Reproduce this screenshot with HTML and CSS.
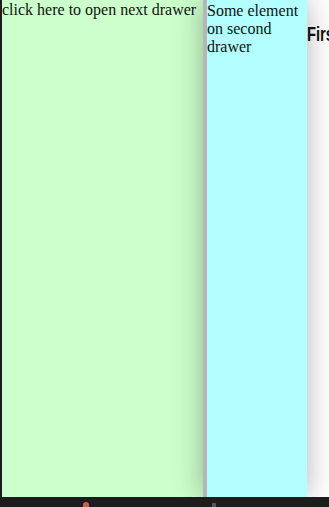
FILE: index.html
```html
<!DOCTYPE html>
<html>
<head>
<meta charset="utf-8">
<link rel="stylesheet" href="styles.css">
</head>
<body>
<div class="frame">
  <div class="stage">
    <div class="drawer-one">click here to open next drawer</div>
    <div class="drawer-two">Some element on second drawer</div>
    <div class="content"><h1 class="title">First drawer</h1></div>
  </div>
  <div class="taskbar">
    <span class="dot-red"></span>
    <span class="dot-gray"></span>
  </div>
</div>
</body>
</html>
```
FILE: styles.css
```css
html, body {
  margin: 0;
  padding: 0;
}
body {
  width: 329px;
  height: 507px;
  overflow: hidden;
  background: #1c1c1c;
  font-family: "Liberation Serif", "Times New Roman", serif;
  font-size: 16px;
  color: #111;
}
.frame {
  display: flex;
  flex-direction: column;
  height: 507px;
  padding-left: 2px;
  box-sizing: border-box;
}
.stage {
  display: flex;
  height: 497px;
  background: #fff;
  overflow: hidden;
}
.drawer-one {
  flex: 0 0 201px;
  background: #ccffcc;
  line-height: 20px;
  white-space: nowrap;
}
.drawer-two {
  flex: 0 0 100px;
  background: #b3ffff;
  border-left: 4px solid #b6b6b6;
  padding-top: 2px;
  line-height: 18px;
  position: relative;
  z-index: 2;
  box-shadow: 0 0 28px rgba(0, 0, 0, 0.3);
}
.content {
  flex: 1;
  min-width: 0;
  position: relative;
  z-index: 1;
}
.title {
  margin: 22px 0 0 0;
  font-family: "Liberation Sans", Arial, sans-serif;
  font-size: 21px;
  font-weight: bold;
  white-space: nowrap;
  color: #111;
  transform: scaleX(0.7);
  transform-origin: left center;
}
.taskbar {
  flex: 1;
  position: relative;
  margin-left: -2px;
}
.dot-red {
  position: absolute;
  left: 83px;
  top: 5px;
  width: 6px;
  height: 8px;
  border-radius: 3px;
  background: #c9604f;
}
.dot-gray {
  position: absolute;
  left: 212px;
  top: 6px;
  width: 4px;
  height: 6px;
  background: #555;
}
```
